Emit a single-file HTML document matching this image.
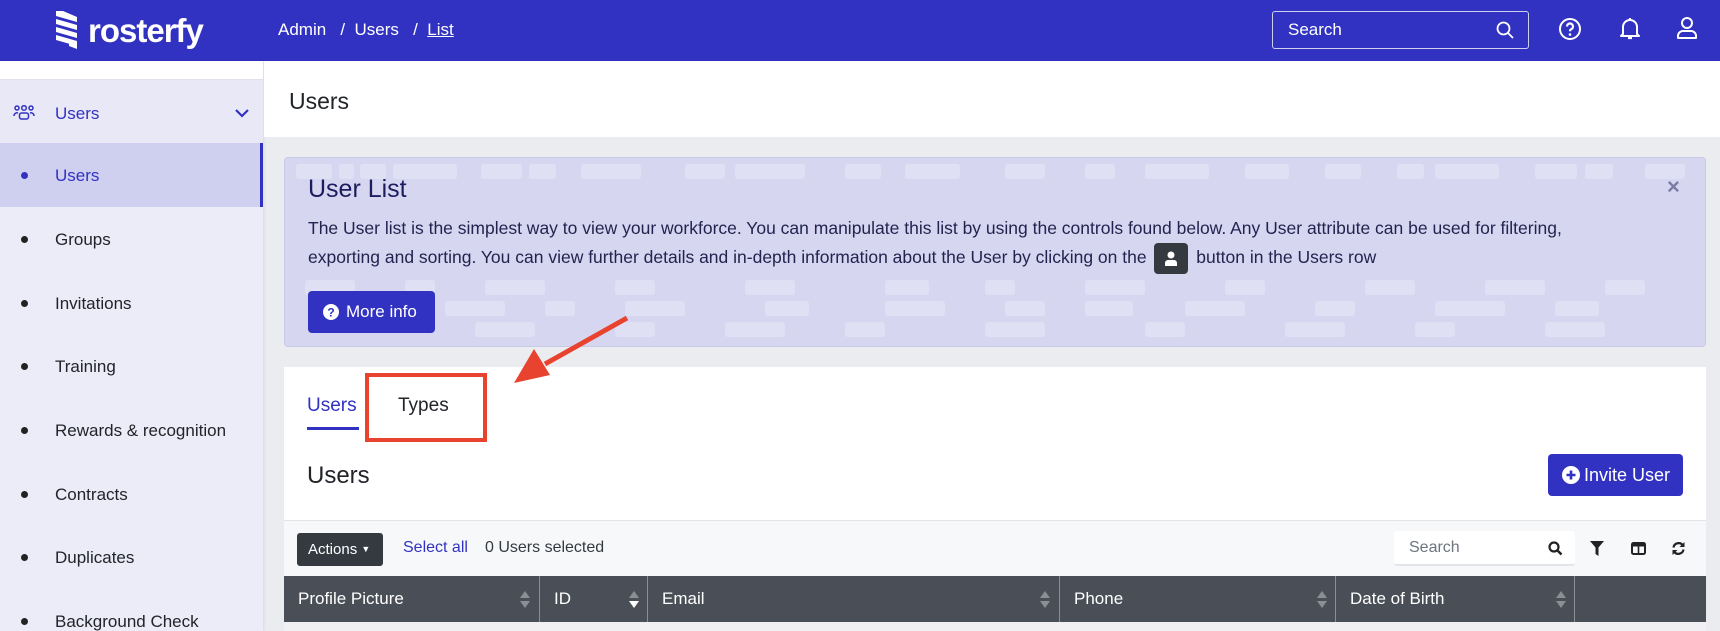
<!DOCTYPE html>
<html style="width:1720px;height:631px;overflow:hidden"><head><meta charset="utf-8"><style>
*{box-sizing:border-box;margin:0;padding:0}
html,body{width:1720px;height:631px;overflow:hidden}
body{font-family:"Liberation Sans",sans-serif;background:#ebecf0;position:relative;color:#212529}
.abs{position:absolute}
.hdr{left:0;top:0;width:1720px;height:61px;background:#3132c2}
.side{left:0;top:61px;width:263px;height:570px;background:#ecebf8;box-shadow:1px 0 3px rgba(0,0,0,.08)}
.item{position:absolute;left:0;width:263px;height:64px;font-size:17px;color:#212529}
.item span.d{position:absolute;left:21px;top:29px;width:7px;height:7px;border-radius:50%;background:#222}
.item span.t{position:absolute;left:55px;top:23px}
.bn{left:284px;top:157px;width:1422px;height:190px;background:#d6d6f1;border:1px solid #c9c9ea;border-radius:4px;overflow:hidden}
.bn i{position:absolute;background:#e0e0f5;border-radius:3px;height:15px}
.card{left:284px;top:367px;width:1422px;height:264px;background:#fff}
.th{position:absolute;top:0;height:46px;border-right:1px solid #8a8e95;color:#fff;font-size:17px;padding:13px 14px}
</style></head><body>
<div class="abs hdr">
  <svg class="abs" style="left:55px;top:11px" width="26" height="38" viewBox="0 0 26 38"><g fill="#fff"><path d="M1 0h7l14 6v5L1 5z"/><path d="M1 8l21 6v5L1 13z"/><path d="M1 16l21 6v5L1 21z"/><path d="M1 24l21 6v5l-21-6z"/><path d="M14 30l8 3v5l-8-3z"/></g></svg>
  <div class="abs" style="left:88px;top:12px;color:#fff;font-size:33px;font-weight:bold;letter-spacing:-1px">rosterfy</div>
  <div class="abs" style="left:278px;top:20px;color:#fff;font-size:17px">Admin&nbsp;&nbsp; / &nbsp;Users&nbsp;&nbsp; / &nbsp;<u>List</u></div>
  <div class="abs" style="left:1272px;top:11px;width:257px;height:38px;border:1.5px solid #cfd0f0;border-radius:3px"></div>
  <div class="abs" style="left:1288px;top:20px;color:#fff;font-size:17px">Search</div>
  <svg class="abs" style="left:1496px;top:21px" width="18" height="18" viewBox="0 0 18 18"><circle cx="7.5" cy="7.5" r="6" fill="none" stroke="#fff" stroke-width="1.8"/><path d="M12 12l5 5" stroke="#fff" stroke-width="1.8"/></svg>
  <svg class="abs" style="left:1558px;top:17px" width="24" height="24" viewBox="0 0 24 24"><circle cx="12" cy="12" r="10" fill="none" stroke="#fff" stroke-width="2"/><path d="M9 9.5a3 3 0 1 1 4 2.8c-.8.4-1 1-1 2" fill="none" stroke="#fff" stroke-width="2.2"/><circle cx="12" cy="17.5" r="1.3" fill="#fff"/></svg>
  <svg class="abs" style="left:1619px;top:16px" width="22" height="25" viewBox="0 0 22 25"><path d="M4 18V11a7 7 0 0 1 14 0v7l2 2H2z" fill="none" stroke="#fff" stroke-width="2" stroke-linejoin="round"/><path d="M9 22h4" stroke="#fff" stroke-width="2.2"/><path d="M11 2v2" stroke="#fff" stroke-width="2"/></svg>
  <svg class="abs" style="left:1676px;top:16px" width="22" height="24" viewBox="0 0 22 24"><circle cx="11" cy="7" r="5" fill="none" stroke="#fff" stroke-width="2"/><path d="M2 22v-2a5 5 0 0 1 5-5h8a5 5 0 0 1 5 5v2z" fill="none" stroke="#fff" stroke-width="2" stroke-linejoin="round"/></svg>
</div>
<div class="abs side">
  <div class="abs" style="left:0;top:0;width:263px;height:19px;background:#fff;border-bottom:1px solid #e0e0ee"></div>
  <div class="abs" style="left:0;top:19px;width:263px;height:63px;background:#e9e8f6">
    <svg class="abs" style="left:13px;top:25px" width="22" height="16" viewBox="0 0 22 16"><g fill="none" stroke="#3132c2" stroke-width="1.5"><circle cx="4" cy="3" r="2"/><circle cx="11" cy="3" r="2.3"/><circle cx="18" cy="3" r="2"/><path d="M1 11a3 3 0 0 1 4-3M21 11a3 3 0 0 0-4-3"/><rect x="6.5" y="8" width="9" height="6" rx="2"/></g></svg>
    <div class="abs" style="left:55px;top:24px;font-size:17px;color:#3132c2">Users</div>
    <svg class="abs" style="left:235px;top:29px" width="14" height="9" viewBox="0 0 14 9"><path d="M1 1l6 6 6-6" fill="none" stroke="#3132c2" stroke-width="2.2"/></svg>
  </div>
  <div class="item" style="top:82px;background:#cfcff0;border-right:3px solid #3132c2"><span class="d" style="background:#3132c2"></span><span class="t" style="color:#3132c2">Users</span></div>
  <div class="item" style="top:146px"><span class="d"></span><span class="t">Groups</span></div>
  <div class="item" style="top:210px"><span class="d"></span><span class="t">Invitations</span></div>
  <div class="item" style="top:273px"><span class="d"></span><span class="t">Training</span></div>
  <div class="item" style="top:337px"><span class="d"></span><span class="t">Rewards &amp; recognition</span></div>
  <div class="item" style="top:401px"><span class="d"></span><span class="t">Contracts</span></div>
  <div class="item" style="top:464px"><span class="d"></span><span class="t">Duplicates</span></div>
  <div class="item" style="top:528px"><span class="d"></span><span class="t">Background Check</span></div>
</div>
<div class="abs" style="left:264px;top:61px;width:1456px;height:76px;background:#fff"></div>
<div class="abs" style="left:289px;top:88px;font-size:23px;color:#212529">Users</div>
<div class="abs bn">
  <i style="left:11px;top:6px;width:36px"></i><i style="left:54px;top:6px;width:15px"></i><i style="left:75px;top:6px;width:26px"></i><i style="left:108px;top:6px;width:64px"></i><i style="left:196px;top:6px;width:41px"></i><i style="left:244px;top:6px;width:27px"></i><i style="left:296px;top:6px;width:60px"></i><i style="left:400px;top:6px;width:40px"></i><i style="left:450px;top:6px;width:70px"></i><i style="left:560px;top:6px;width:36px"></i><i style="left:620px;top:6px;width:55px"></i><i style="left:720px;top:6px;width:40px"></i><i style="left:800px;top:6px;width:30px"></i><i style="left:860px;top:6px;width:64px"></i><i style="left:960px;top:6px;width:44px"></i><i style="left:1040px;top:6px;width:36px"></i><i style="left:1112px;top:6px;width:27px"></i><i style="left:1150px;top:6px;width:64px"></i><i style="left:1250px;top:6px;width:42px"></i><i style="left:1300px;top:6px;width:28px"></i><i style="left:1360px;top:6px;width:40px"></i>
  <i style="left:20px;top:122px;width:50px"></i><i style="left:120px;top:122px;width:30px"></i><i style="left:200px;top:122px;width:60px"></i><i style="left:330px;top:122px;width:40px"></i><i style="left:460px;top:122px;width:50px"></i><i style="left:600px;top:122px;width:44px"></i><i style="left:700px;top:122px;width:30px"></i><i style="left:800px;top:122px;width:60px"></i><i style="left:940px;top:122px;width:40px"></i><i style="left:1080px;top:122px;width:50px"></i><i style="left:1200px;top:122px;width:60px"></i><i style="left:1320px;top:122px;width:40px"></i>
  <i style="left:160px;top:143px;width:60px"></i><i style="left:260px;top:143px;width:30px"></i><i style="left:340px;top:143px;width:60px"></i><i style="left:480px;top:143px;width:44px"></i><i style="left:600px;top:143px;width:60px"></i><i style="left:720px;top:143px;width:40px"></i><i style="left:800px;top:143px;width:48px"></i><i style="left:900px;top:143px;width:60px"></i><i style="left:1030px;top:143px;width:40px"></i><i style="left:1150px;top:143px;width:70px"></i><i style="left:1270px;top:143px;width:44px"></i>
  <i style="left:190px;top:164px;width:60px"></i><i style="left:330px;top:164px;width:40px"></i><i style="left:440px;top:164px;width:60px"></i><i style="left:560px;top:164px;width:40px"></i><i style="left:700px;top:164px;width:60px"></i><i style="left:860px;top:164px;width:40px"></i><i style="left:1000px;top:164px;width:60px"></i><i style="left:1130px;top:164px;width:40px"></i><i style="left:1260px;top:164px;width:60px"></i>
  <div class="abs" style="left:23px;top:17px;font-size:25px;color:#1c1d5e">User List</div>
  <div class="abs" style="left:1382px;top:16px;font-size:22px;color:#7b7ca6;font-weight:bold">×</div>
  <div class="abs" style="left:23px;top:56px;font-size:17.5px;line-height:29px;color:#22244f;white-space:nowrap">The User list is the simplest way to view your workforce. You can manipulate this list by using the controls found below. Any User attribute can be used for filtering,<br>exporting and sorting. You can view further details and in-depth information about the User by clicking on the <span style="display:inline-block;width:34px;height:31px;background:#343a40;border-radius:4px;vertical-align:middle;position:relative;margin:0 3px"><svg style="position:absolute;left:11px;top:8px" width="12" height="15" viewBox="0 0 12 15"><circle cx="6" cy="4" r="3.5" fill="#fff"/><path d="M0 15v-3a3 3 0 0 1 3-3h6a3 3 0 0 1 3 3v3z" fill="#fff"/></svg></span> button in the Users row</div>
  <div class="abs" style="left:23px;top:133px;width:127px;height:42px;background:#3132c2;border-radius:4px;color:#fff;font-size:17px;padding:11px 0 0 38px">More info</div>
  <svg class="abs" style="left:38px;top:146px" width="16" height="16" viewBox="0 0 16 16"><circle cx="8" cy="8" r="8" fill="#fff"/><text x="8" y="12.5" text-anchor="middle" font-size="12" font-weight="bold" fill="#3132c2" font-family="Liberation Sans">?</text></svg>
</div>
<div class="abs card">
  <div class="abs" style="left:23px;top:28px;font-size:19px;color:#3132c2">Users</div>
  <div class="abs" style="left:23px;top:60px;width:52px;height:3px;background:#3132c2"></div>
  <div class="abs" style="left:114px;top:28px;font-size:19px;color:#212529">Types</div>
  <div class="abs" style="left:81px;top:6px;width:122px;height:69px;border:4px solid #e8432e"></div>
  <div class="abs" style="left:23px;top:95px;font-size:24px;color:#212529">Users</div>
  <div class="abs" style="left:1264px;top:87px;width:135px;height:42px;background:#3132c2;border-radius:4px;color:#fff;font-size:18px;padding:11px 0 0 36px">Invite User</div>
  <svg class="abs" style="left:1278px;top:99px" width="18" height="18" viewBox="0 0 18 18"><circle cx="9" cy="9" r="9" fill="#fff"/><path d="M9 4.5v9M4.5 9h9" stroke="#3132c2" stroke-width="2.6"/></svg>
  <div class="abs" style="left:0;top:153px;width:1422px;height:56px;background:#f7f8fa;border-top:1px solid #e3e4e8"></div>
  <div class="abs" style="left:13px;top:166px;width:86px;height:33px;background:#343a40;border-radius:3px;color:#fff;font-size:15px;padding:8px 0 0 11px">Actions <span style="font-size:9px;vertical-align:2px">▼</span></div>
  <div class="abs" style="left:119px;top:172px;font-size:16px;color:#3132c2">Select all</div>
  <div class="abs" style="left:201px;top:172px;font-size:16px;color:#343a40">0 Users selected</div>
  <div class="abs" style="left:1110px;top:164px;width:181px;height:35px;background:#fff;border-bottom:2px solid #e3e4e8;border-radius:3px"></div>
  <div class="abs" style="left:1125px;top:172px;font-size:16px;color:#6c757d">Search</div>
  <svg class="abs" style="left:1264px;top:174px" width="15" height="15" viewBox="0 0 15 15"><circle cx="6" cy="6" r="4.5" fill="none" stroke="#222" stroke-width="2.2"/><path d="M9.5 9.5l4 4" stroke="#222" stroke-width="2.5"/></svg>
  <svg class="abs" style="left:1306px;top:174px" width="14" height="15" viewBox="0 0 14 15"><path d="M0 0h14L8.5 6.5V15l-3-2V6.5z" fill="#222"/></svg>
  <svg class="abs" style="left:1347px;top:175px" width="15" height="13" viewBox="0 0 15 13"><rect x="1" y="1" width="13" height="11" rx="1.5" fill="none" stroke="#222" stroke-width="2"/><path d="M1 3h13" stroke="#222" stroke-width="3"/><path d="M7.5 2v10" stroke="#222" stroke-width="1.6"/></svg>
  <svg class="abs" style="left:1387px;top:174px" width="15" height="15" viewBox="0 0 15 15"><path d="M2.5 6.5a5.2 5.2 0 0 1 9.5-2M12.5 8.5a5.2 5.2 0 0 1-9.5 2" fill="none" stroke="#222" stroke-width="2.2"/><path d="M13.5 1v5h-5zM1.5 14V9h5z" fill="#222"/></svg>
  <div class="abs" style="left:0;top:209px;width:1422px;height:46px;background:#4a4f57">
    <div class="th" style="left:0;width:256px">Profile Picture</div>
    <div class="th" style="left:256px;width:108px">ID</div>
    <div class="th" style="left:364px;width:412px">Email</div>
    <div class="th" style="left:776px;width:276px">Phone</div>
    <div class="th" style="left:1052px;width:239px">Date of Birth</div>
    <div class="th" style="left:1291px;width:131px;border-right:none"></div>
    <svg class="abs" style="left:236px;top:15px" width="10" height="17" viewBox="0 0 10 17"><path d="M5 0l5 7H0z M0 10h10l-5 7z" fill="#8a8e95"/></svg>
    <svg class="abs" style="left:345px;top:15px" width="10" height="17" viewBox="0 0 10 17"><path d="M5 0l5 7H0z" fill="#8a8e95"/><path d="M0 10h10l-5 7z" fill="#fff"/></svg>
    <svg class="abs" style="left:756px;top:15px" width="10" height="17" viewBox="0 0 10 17"><path d="M5 0l5 7H0z M0 10h10l-5 7z" fill="#8a8e95"/></svg>
    <svg class="abs" style="left:1033px;top:15px" width="10" height="17" viewBox="0 0 10 17"><path d="M5 0l5 7H0z M0 10h10l-5 7z" fill="#8a8e95"/></svg>
    <svg class="abs" style="left:1272px;top:15px" width="10" height="17" viewBox="0 0 10 17"><path d="M5 0l5 7H0z M0 10h10l-5 7z" fill="#8a8e95"/></svg>
  </div>
  <div class="abs" style="left:0;top:255px;width:1422px;height:9px;background:#f1f1f3"></div>
</div>
<svg class="abs" style="left:0;top:0" width="1720" height="631"><path d="M627 318L545 364" stroke="#e8432e" stroke-width="5"/><path d="M514 383l20-34 16 26z" fill="#e8432e"/></svg>
</body></html>
